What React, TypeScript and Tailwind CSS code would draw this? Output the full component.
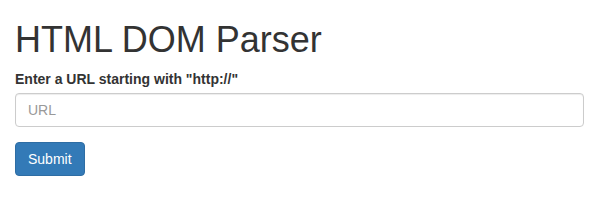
export default function App() {
  return (
    <div className="h-[200px] overflow-hidden bg-white px-[15px] pt-[20px] text-[14px] leading-[20px] text-[#333] [font-family:'Liberation_Sans',Arial,sans-serif]">
      <h1 className="mb-[9px] text-[36px] leading-[1.1] font-normal">HTML DOM Parser</h1>
      <form onSubmit={(e) => e.preventDefault()}>
        <div className="mb-[15px]">
          <label htmlFor="url" className="mb-[4px] inline-block font-bold">
            Enter a URL starting with "http://"
          </label>
          <input
            id="url"
            type="text"
            placeholder="URL"
            className="block h-[34px] w-full rounded-[4px] border border-[#ccc] bg-white px-[12px] py-[6px] text-[14px] text-[#555] shadow-[inset_0_1px_1px_rgba(0,0,0,0.075)] placeholder:text-[#999] focus:outline-none"
          />
        </div>
        <button
          type="submit"
          className="inline-block rounded-[4px] border border-[#2e6da4] bg-[#337ab7] px-[12px] py-[6px] text-[14px] leading-[20px] text-white"
        >
          Submit
        </button>
      </form>
    </div>
  );
}
